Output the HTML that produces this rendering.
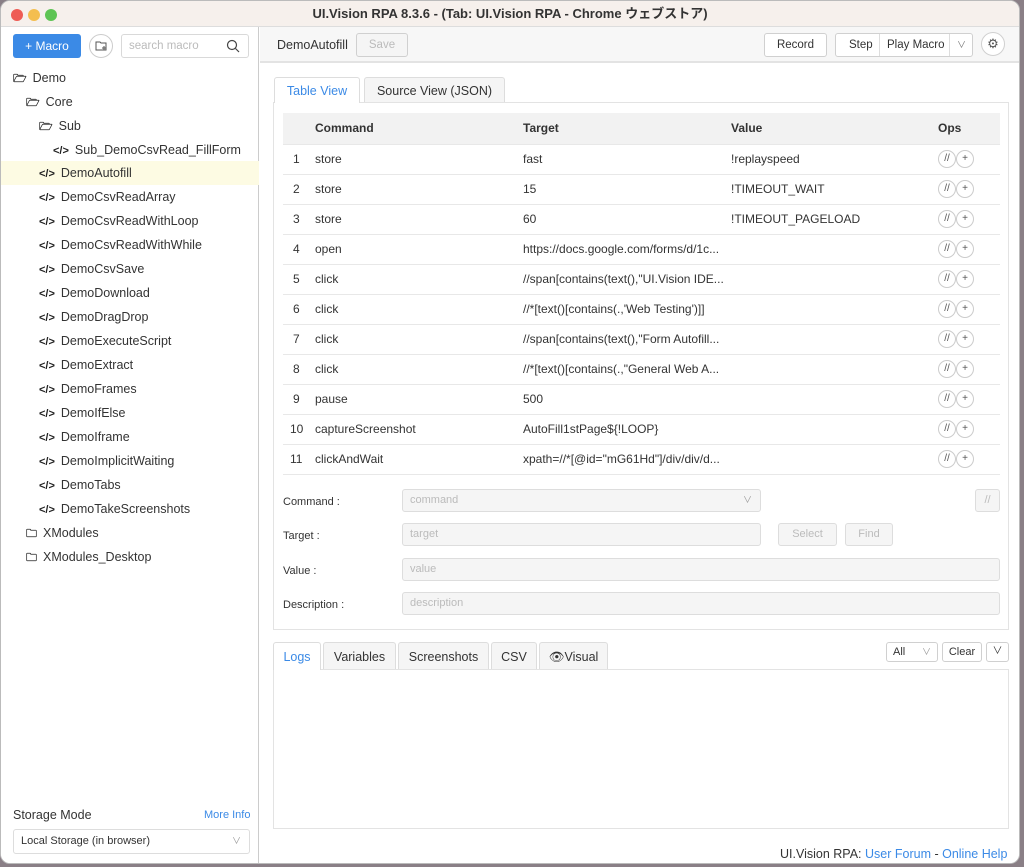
<!DOCTYPE html>
<html><head><meta charset="utf-8"><style>
*{box-sizing:border-box;margin:0;padding:0}
body{width:1024px;height:867px;overflow:hidden;background:#8a7f86;font-family:"Liberation Sans","Noto Sans CJK JP",sans-serif;font-size:12px;color:#333;position:relative}
.win{position:absolute;left:0;top:0;width:1020px;height:864px;background:#fff;border-radius:10px;overflow:hidden;border:1px solid #bbb}
.title{height:26px;background:#f6f0ec;border-bottom:1px solid #ddd;text-align:center;font-weight:bold;font-size:13px;line-height:26px;color:#333}
.dot{position:absolute;top:8px;width:12px;height:12px;border-radius:50%}
.side{position:absolute;left:0;top:26px;width:258px;bottom:0;border-right:1px solid #ccc;background:#fff}
.btnp{position:absolute;left:12px;top:7px;width:68px;height:24px;background:#3b8ae6;color:#fff;border-radius:3px;text-align:center;line-height:24px;font-size:12px}
.fold{position:absolute;left:88px;top:7px;width:24px;height:24px;border:1px solid #ccc;border-radius:50%}
.search{position:absolute;left:120px;top:7px;width:128px;height:24px;border:1px solid #d9d9d9;border-radius:3px;color:#bbb;padding-left:7px;line-height:22px;font-size:11.5px}
.tree div{position:absolute;font-size:12.5px;color:#333;height:24px;line-height:24px;white-space:nowrap}
.ic{font-size:11px;margin-right:6px;color:#222;font-weight:bold}
.main{position:absolute;left:259px;top:26px;right:0;bottom:0;background:#fff}
.tb{height:36px;background:#f7f7f7;border-bottom:2px solid #e3e3e3;position:relative}
.b{position:absolute;border:1px solid #d0d0d0;border-radius:3px;background:#fff;text-align:center;font-size:11.5px;color:#333}
.panel{position:absolute;border:1px solid #e3e3e3;background:#fff}
.tab{position:absolute;border:1px solid #ddd;border-bottom:none;background:#f5f5f5;text-align:center;font-size:12.5px;color:#333;border-radius:3px 3px 0 0}
.tab.on{background:#fff;color:#3b8ae6}
table{border-collapse:collapse;position:absolute;left:9px;top:10px;width:717px;table-layout:fixed}
td,th{height:30px;text-align:left;font-size:12px;border-bottom:1px solid #e8e8e8;font-weight:normal;white-space:nowrap;overflow:hidden}
th{background:#f2f2f2;font-weight:bold;height:31px;font-size:12px}
.ops span{display:inline-block;width:18px;height:18px;border:1px solid #ccc;border-radius:50%;text-align:center;line-height:16px;font-size:10px;color:#555;vertical-align:middle}
.lbl{position:absolute;left:9px;font-size:11px}
.inp{position:absolute;background:#f5f5f5;border:1px solid #ddd;border-radius:3px;height:23px;line-height:21px;padding-left:7px;color:#bbb;font-size:11px}
a{color:#3b8ae6;text-decoration:none}
</style></head><body>
<div class="win">
<div class="title">UI.Vision RPA 8.3.6 - (Tab: UI.Vision RPA - Chrome ウェブストア)</div>
<div class="dot" style="left:10px;background:#ee5c55"></div>
<div class="dot" style="left:27px;background:#f4be4f"></div>
<div class="dot" style="left:44px;background:#5ec454"></div>
<div class="side">
<div class="btnp">+ Macro</div>
<div class="fold"><svg width="22" height="22" viewBox="0 0 22 22"><path d="M6 7h4l1 1h5v7H6z" fill="none" stroke="#555" stroke-width="1"/><path d="M14 11v4M12 13h4" stroke="#555"/></svg></div>
<div class="search">search macro<svg style="position:absolute;right:8px;top:4px" width="14" height="14" viewBox="0 0 14 14"><circle cx="6" cy="6" r="4.5" fill="none" stroke="#444" stroke-width="1.2"/><path d="M9.5 9.5L13 13" stroke="#444" stroke-width="1.2"/></svg></div>
<div class="tree">
<div style="left:12px;top:39px"><span class="ic">🗁</span>Demo</div>
<div style="left:25px;top:63px"><span class="ic">🗁</span>Core</div>
<div style="left:38px;top:87px"><span class="ic">🗁</span>Sub</div>
<div style="left:52px;top:111px"><span class="ic">&lt;/&gt;</span>Sub_DemoCsvRead_FillForm</div>
<div style="left:0;width:258px;top:134px;background:#fdfbe3;padding-left:38px"><span class="ic">&lt;/&gt;</span>DemoAutofill</div>
<div style="left:38px;top:158px"><span class="ic">&lt;/&gt;</span>DemoCsvReadArray</div>
<div style="left:38px;top:182px"><span class="ic">&lt;/&gt;</span>DemoCsvReadWithLoop</div>
<div style="left:38px;top:206px"><span class="ic">&lt;/&gt;</span>DemoCsvReadWithWhile</div>
<div style="left:38px;top:230px"><span class="ic">&lt;/&gt;</span>DemoCsvSave</div>
<div style="left:38px;top:254px"><span class="ic">&lt;/&gt;</span>DemoDownload</div>
<div style="left:38px;top:278px"><span class="ic">&lt;/&gt;</span>DemoDragDrop</div>
<div style="left:38px;top:302px"><span class="ic">&lt;/&gt;</span>DemoExecuteScript</div>
<div style="left:38px;top:326px"><span class="ic">&lt;/&gt;</span>DemoExtract</div>
<div style="left:38px;top:350px"><span class="ic">&lt;/&gt;</span>DemoFrames</div>
<div style="left:38px;top:374px"><span class="ic">&lt;/&gt;</span>DemoIfElse</div>
<div style="left:38px;top:398px"><span class="ic">&lt;/&gt;</span>DemoIframe</div>
<div style="left:38px;top:422px"><span class="ic">&lt;/&gt;</span>DemoImplicitWaiting</div>
<div style="left:38px;top:446px"><span class="ic">&lt;/&gt;</span>DemoTabs</div>
<div style="left:38px;top:470px"><span class="ic">&lt;/&gt;</span>DemoTakeScreenshots</div>
<div style="left:25px;top:494px"><span class="ic">🗀</span>XModules</div>
<div style="left:25px;top:518px"><span class="ic">🗀</span>XModules_Desktop</div>
</div>
<div style="position:absolute;left:12px;top:781px;font-size:12.5px">Storage Mode</div>
<div style="position:absolute;left:203px;top:782px;font-size:11px"><a>More Info</a></div>
<div style="position:absolute;left:12px;top:802px;width:237px;height:25px;border:1px solid #ddd;border-radius:3px;font-size:11px;line-height:23px;padding-left:7px">Local Storage (in browser)<span style="position:absolute;right:8px;color:#999;font-size:9px">∨</span></div>
</div>
<div class="main">
<div class="tb">
<div style="position:absolute;left:17px;top:11px;font-size:12.5px">DemoAutofill</div>
<div class="b" style="left:96px;top:6px;width:52px;height:24px;line-height:22px;color:#bbb;background:#f5f5f5">Save</div>
<div class="b" style="left:504px;top:6px;width:63px;height:24px;line-height:22px">Record</div>
<div class="b" style="left:575px;top:6px;width:138px;height:24px;line-height:22px;text-align:left"><span style="position:absolute;left:13px">Step</span><span style="position:absolute;left:43px;top:0;height:22px;border-left:1px solid #ddd"></span><span style="position:absolute;left:51px">Play Macro</span><span style="position:absolute;left:113px;top:0;height:22px;border-left:1px solid #ddd"></span><span style="position:absolute;left:121px;color:#777;font-size:9px">∨</span></div>
<div class="b" style="left:721px;top:5px;width:24px;height:24px;border-radius:50%;line-height:21px;font-size:13px;color:#555">⚙</div>
</div>
<div class="tab on" style="left:14px;top:50px;width:86px;height:26px;line-height:26px;z-index:2">Table View</div>
<div class="tab" style="left:104px;top:50px;width:141px;height:26px;line-height:26px">Source View (JSON)</div>
<div class="panel" style="left:13px;top:75px;width:736px;height:528px">
<table>
<colgroup><col style="width:32px"><col style="width:208px"><col style="width:208px"><col style="width:207px"><col></colgroup>
<tr><th></th><th>Command</th><th>Target</th><th>Value</th><th>Ops</th></tr>
<tr><td style="padding-left:10px">1</td><td>store</td><td>fast</td><td>!replayspeed</td><td class="ops"><span>//</span><span>+</span></td></tr>
<tr><td style="padding-left:10px">2</td><td>store</td><td>15</td><td>!TIMEOUT_WAIT</td><td class="ops"><span>//</span><span>+</span></td></tr>
<tr><td style="padding-left:10px">3</td><td>store</td><td>60</td><td>!TIMEOUT_PAGELOAD</td><td class="ops"><span>//</span><span>+</span></td></tr>
<tr><td style="padding-left:10px">4</td><td>open</td><td>https://docs.google.com/forms/d/1c...</td><td></td><td class="ops"><span>//</span><span>+</span></td></tr>
<tr><td style="padding-left:10px">5</td><td>click</td><td>//span[contains(text(),"UI.Vision IDE...</td><td></td><td class="ops"><span>//</span><span>+</span></td></tr>
<tr><td style="padding-left:10px">6</td><td>click</td><td>//*[text()[contains(.,'Web Testing')]]</td><td></td><td class="ops"><span>//</span><span>+</span></td></tr>
<tr><td style="padding-left:10px">7</td><td>click</td><td>//span[contains(text(),"Form Autofill...</td><td></td><td class="ops"><span>//</span><span>+</span></td></tr>
<tr><td style="padding-left:10px">8</td><td>click</td><td>//*[text()[contains(.,"General Web A...</td><td></td><td class="ops"><span>//</span><span>+</span></td></tr>
<tr><td style="padding-left:10px">9</td><td>pause</td><td>500</td><td></td><td class="ops"><span>//</span><span>+</span></td></tr>
<tr><td style="padding-left:7px">10</td><td>captureScreenshot</td><td>AutoFill1stPage${!LOOP}</td><td></td><td class="ops"><span>//</span><span>+</span></td></tr>
<tr><td style="padding-left:7px">11</td><td>clickAndWait</td><td>xpath=//*[@id="mG61Hd"]/div/div/d...</td><td></td><td class="ops"><span>//</span><span>+</span></td></tr>
</table>
<div class="lbl" style="top:393px">Command :</div>
<div class="inp" style="left:128px;top:386px;width:359px">command<span style="position:absolute;right:8px;font-size:9px;color:#999">∨</span></div>
<div class="inp" style="left:701px;top:386px;width:25px;text-align:center;padding:0">//</div>
<div class="lbl" style="top:427px">Target :</div>
<div class="inp" style="left:128px;top:420px;width:359px">target</div>
<div class="inp" style="left:504px;top:420px;width:59px;text-align:center;padding:0">Select</div>
<div class="inp" style="left:571px;top:420px;width:48px;text-align:center;padding:0">Find</div>
<div class="lbl" style="top:462px">Value :</div>
<div class="inp" style="left:128px;top:455px;width:598px">value</div>
<div class="lbl" style="top:496px">Description :</div>
<div class="inp" style="left:128px;top:489px;width:598px">description</div>
</div>
<div class="tab on" style="left:13px;top:615px;width:48px;height:28px;line-height:28px;z-index:2">Logs</div>
<div class="tab" style="left:63px;top:615px;width:73px;height:28px;line-height:28px">Variables</div>
<div class="tab" style="left:138px;top:615px;width:91px;height:28px;line-height:28px">Screenshots</div>
<div class="tab" style="left:231px;top:615px;width:46px;height:28px;line-height:28px">CSV</div>
<div class="tab" style="left:279px;top:615px;width:69px;height:28px;line-height:28px">👁Visual</div>
<div class="b" style="left:626px;top:615px;width:52px;height:20px;line-height:18px;text-align:left;padding-left:6px;font-size:11px">All<span style="position:absolute;right:6px;color:#999;font-size:9px">∨</span></div>
<div class="b" style="left:682px;top:615px;width:40px;height:20px;line-height:18px;font-size:11px">Clear</div>
<div class="b" style="left:726px;top:615px;width:23px;height:20px;line-height:18px;font-size:10px">∨</div>
<div class="panel" style="left:13px;top:642px;width:736px;height:160px"></div>
<div style="position:absolute;left:520px;top:820px;font-size:12.5px">UI.Vision RPA: <a>User Forum</a> - <a>Online Help</a></div>
</div>
</div>
</body></html>
